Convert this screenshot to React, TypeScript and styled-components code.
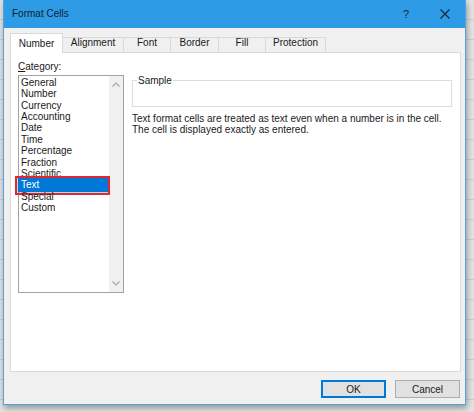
import React from "react";
import styled, { createGlobalStyle } from "styled-components";

const GlobalStyle = createGlobalStyle`
  html, body {
    margin: 0;
    padding: 0;
  }
  body {
    width: 474px;
    height: 412px;
    overflow: hidden;
    background-color: #e2e2e2;
    background-image: repeating-linear-gradient(
      to bottom,
      transparent 0,
      transparent 19px,
      #cdcdcd 19px,
      #cdcdcd 20px
    );
    font-family: "Liberation Sans", Arial, sans-serif;
    color: #1a1a1a;
  }
`;

const CATEGORIES = [
  "General",
  "Number",
  "Currency",
  "Accounting",
  "Date",
  "Time",
  "Percentage",
  "Fraction",
  "Scientific",
  "Text",
  "Special",
  "Custom",
];

const TABS = [
  { label: "Number", width: 53 },
  { label: "Alignment", width: 62 },
  { label: "Font", width: 48 },
  { label: "Border", width: 49 },
  { label: "Fill", width: 48 },
  { label: "Protection", width: 61 },
];

export default function App() {
  return (
    <Page>
      <GlobalStyle />
      <Dialog>
        <TitleBar>
          <Title>Format Cells</Title>
          <HeaderButton $width={38}>?</HeaderButton>
          <HeaderButton $width={40}>
            <svg width="10" height="10" viewBox="0 0 10 10">
              <path d="M0.5 0.5 L9.5 9.5 M9.5 0.5 L0.5 9.5" stroke="#1b2430" strokeWidth="1.1" />
            </svg>
          </HeaderButton>
        </TitleBar>
        <Body>
          <TabStrip>
            {TABS.map((t, i) => (
              <Tab key={t.label} $width={t.width} $active={i === 0}>
                {t.label}
              </Tab>
            ))}
          </TabStrip>
          <Panel>
            <CategoryColumn>
              <Label>
                <u>C</u>ategory:
              </Label>
              <ListBox>
                <Items>
                  {CATEGORIES.map((c) => (
                    <Item key={c} $selected={c === "Text"}>
                      {c}
                    </Item>
                  ))}
                </Items>
                <ScrollBar>
                  <svg width="8" height="5" viewBox="0 0 8 5">
                    <polyline points="0.5,4.5 4,1 7.5,4.5" fill="none" stroke="#a8a8a8" strokeWidth="1.2" />
                  </svg>
                  <svg width="8" height="5" viewBox="0 0 8 5">
                    <polyline points="0.5,0.5 4,4 7.5,0.5" fill="none" stroke="#a8a8a8" strokeWidth="1.2" />
                  </svg>
                </ScrollBar>
              </ListBox>
            </CategoryColumn>
            <DetailColumn>
              <SampleBox>
                <legend>Sample</legend>
                <SampleValue />
              </SampleBox>
              <Description>
                Text format cells are treated as text even when a number is in the cell.
                <br />
                The cell is displayed exactly as entered.
              </Description>
            </DetailColumn>
          </Panel>
          <Footer>
            <Button $default>OK</Button>
            <Button>Cancel</Button>
          </Footer>
        </Body>
      </Dialog>
    </Page>
  );
}

const Page = styled.div`
  padding-left: 3px;
`;

const Dialog = styled.div`
  width: 461px;
  height: 404px;
  border: 1px solid #4ea3e2;
  border-top: none;
  background: #f0f0f0;
  display: flex;
  flex-direction: column;
  box-shadow: 1px 3px 6px rgba(0, 0, 0, 0.35);
`;

const TitleBar = styled.div`
  height: 28px;
  flex-shrink: 0;
  background: #2e9be6;
  display: flex;
  align-items: center;
  padding-left: 8px;
`;

const Title = styled.div`
  flex: 1;
  font-size: 10px;
  line-height: 14px;
  color: #14202c;
`;

const HeaderButton = styled.div<{ $width: number }>`
  width: ${(p) => p.$width}px;
  height: 28px;
  display: flex;
  align-items: center;
  justify-content: center;
  font-size: 11px;
  color: #1b2430;
`;

const Body = styled.div`
  flex: 1;
  display: flex;
  flex-direction: column;
  padding: 0 4px 0 6px;
`;

const TabStrip = styled.div`
  height: 25px;
  display: flex;
  align-items: flex-end;
  margin-bottom: -1px;
  position: relative;
  z-index: 1;
`;

const Tab = styled.div<{ $width: number; $active?: boolean }>`
  width: ${(p) => p.$width}px;
  height: ${(p) => (p.$active ? 20 : 16)}px;
  box-sizing: border-box;
  border: 1px solid #d9d9d9;
  border-bottom: ${(p) => (p.$active ? "none" : "1px solid #d9d9d9")};
  background: ${(p) => (p.$active ? "#ffffff" : "#f0f0f0")};
  display: flex;
  align-items: flex-end;
  justify-content: center;
  padding-bottom: 2px;
  font-size: 10px;
  line-height: 14px;
  & + & {
    margin-left: -1px;
  }
`;

const Panel = styled.div`
  height: 320px;
  box-sizing: border-box;
  flex-shrink: 0;
  background: #ffffff;
  border: 1px solid #d9d9d9;
  padding: 8px 8px 0 7px;
  display: grid;
  grid-template-columns: 106px 1fr;
  column-gap: 8px;
  align-items: start;
`;

const CategoryColumn = styled.div`
  display: flex;
  flex-direction: column;
`;

const Label = styled.div`
  font-size: 10px;
  line-height: 12px;
  margin-bottom: 2px;
`;

const ListBox = styled.div`
  width: 106px;
  height: 218px;
  box-sizing: border-box;
  border: 1px solid #a3a3a3;
  display: flex;
  background: #ffffff;
`;

const Items = styled.div`
  flex: 1;
  margin-right: 2px;
  padding-top: 1px;
  display: flex;
  flex-direction: column;
`;

const Item = styled.div<{ $selected?: boolean }>`
  position: relative;
  font-size: 10px;
  line-height: 11.36px;
  height: 11.36px;
  padding-left: 2px;
  white-space: nowrap;
  background: ${(p) => (p.$selected ? "#0078d7" : "transparent")};
  color: ${(p) => (p.$selected ? "#ffffff" : "#1a1a1a")};
  box-shadow: ${(p) => (p.$selected ? "0 0 0 1.3px #0078d7" : "none")};

  &::after {
    content: "";
    display: ${(p) => (p.$selected ? "block" : "none")};
    position: absolute;
    top: -3px;
    bottom: -4px;
    left: -4px;
    right: -3px;
    border: 2px solid #e3262d;
  }
`;

const ScrollBar = styled.div`
  width: 14px;
  background: #f0f0f0;
  display: flex;
  flex-direction: column;
  align-items: center;
  justify-content: space-between;
  padding: 6px 0 6px;
`;

const DetailColumn = styled.div`
  display: flex;
  flex-direction: column;
  padding-top: 14px;
`;

const SampleBox = styled.fieldset`
  margin: 0;
  padding: 0;
  border: 1px solid #dcdcdc;
  min-width: 0;
  legend {
    font-size: 10px;
    line-height: 11px;
    padding: 0 1px;
    margin-left: 4px;
  }
`;

const SampleValue = styled.div`
  height: 20px;
`;

const Description = styled.div`
  margin-top: 6px;
  font-size: 10px;
  line-height: 11.3px;
  white-space: nowrap;
`;

const Footer = styled.div`
  display: flex;
  justify-content: flex-end;
  gap: 9px;
  padding: 8px 1px 0 0;
`;

const Button = styled.div<{ $default?: boolean }>`
  width: 65px;
  height: 18px;
  box-sizing: border-box;
  background: #e1e1e1;
  border: 1px solid ${(p) => (p.$default ? "#0078d7" : "#adadad")};
  box-shadow: ${(p) => (p.$default ? "inset 0 0 0 1px #0078d7" : "none")};
  display: flex;
  align-items: center;
  justify-content: center;
  font-size: 10px;
  color: #1a1a1a;
`;
